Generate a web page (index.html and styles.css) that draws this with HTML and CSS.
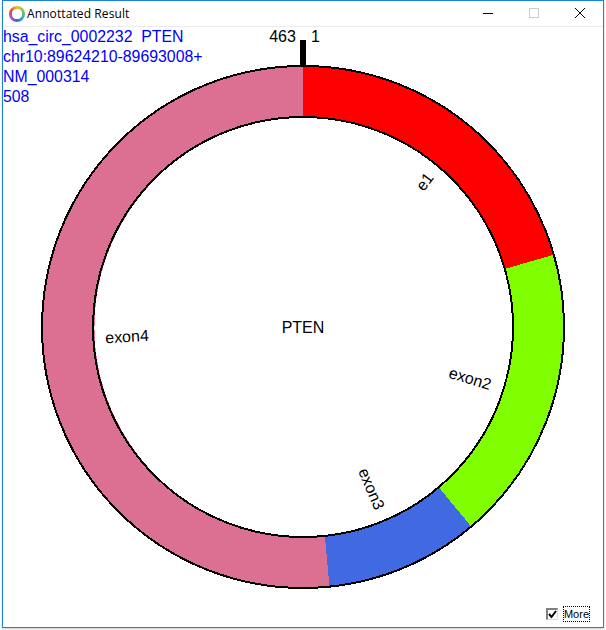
FILE: index.html
```html
<!DOCTYPE html>
<html lang="en">
<head>
    <meta charset="UTF-8">
    <title>Annottated Result</title>
    <link rel="stylesheet" href="styles.css">
</head>
<body>
    <div class="window">
        <div class="titlebar">
            <div class="app-icon"></div>
            <span class="title">Annottated Result</span>
            <div class="controls">
                <svg width="46" height="25" viewBox="0 0 46 25"><path d="M18 12.500h10" class="ctl"/></svg>
                <svg width="46" height="25" viewBox="0 0 46 25"><rect x="18.500" y="7.500" width="9" height="9" class="ctl-off"/></svg>
                <svg width="46" height="25" viewBox="0 0 46 25"><path d="M18 7l10 10M28 7L18 17" class="ctl"/></svg>
            </div>
        </div>
        <div class="canvas">
            <div class="info">
                <div>hsa_circ_0002232&nbsp; PTEN</div>
                <div>chr10:89624210-89693008+</div>
                <div>NM_000314</div>
                <div>508</div>
            </div>

            <!-- viewBox uses window coordinates, centre of the ring is 303,327 -->
            <svg class="plot" width="602" height="601" viewBox="2 27 602 601">
                <path class="seg" fill="#ff0000" d="M303 66A261 261 0 0 1 553.800 254.700L504.800 268.900A210 210 0 0 0 303 117Z"/>
                <path class="seg" fill="#7fff00" d="M553.800 254.700A261 261 0 0 1 470.800 526.100L438.800 487.300A210 210 0 0 0 504.800 268.900Z"/>
                <path class="seg" fill="#4169e1" d="M470.800 526.100A261 261 0 0 1 329.500 586.700L324.900 536A210 210 0 0 0 438.800 487.300Z"/>
                <path class="seg" fill="#db7093" d="M329.500 586.700A261 261 0 1 1 303 66L303 117A210 210 0 1 0 324.900 536Z"/>
                <circle class="ring" cx="303" cy="327" r="261"/>
                <circle class="ring" cx="303" cy="327" r="210"/>
                <rect x="300" y="40" width="6" height="26"/>
                <text class="lbl" x="282.500" y="42" text-anchor="middle">463</text>
                <text class="lbl" x="315.500" y="42" text-anchor="middle">1</text>
                <text class="lbl" x="303" y="333" text-anchor="middle">PTEN</text>
                <text class="lbl" text-anchor="middle" transform="translate(425 182) rotate(-53)" y="5">e1</text>
                <text class="lbl" text-anchor="middle" transform="translate(470 379) rotate(17)" y="5">exon2</text>
                <text class="lbl" text-anchor="middle" transform="translate(371 489) rotate(67)" y="5">exon3</text>
                <text class="lbl" text-anchor="middle" transform="translate(127 337) rotate(-3)" y="5">exon4</text>
            </svg>

            <div class="more">
                <span class="check">
                    <svg width="9" height="9" viewBox="0 0 9 9"><path d="M1 4l2.500 3L8 1" class="tick"/></svg>
                </span>
                <span class="more-label">More</span>
            </div>
        </div>
    </div>
</body>
</html>
```

FILE: styles.css
```css
html, body {
    margin: 0;
    padding: 0;
    background: #fff;
}

body {
    width: 606px;
    height: 630px;
    overflow: hidden;
}

/* window frame */
.window {
    width: 602px;
    height: 628px;
    margin-left: 2px;
    box-sizing: border-box;
    border: 1px solid #1883d7;
    display: flex;
    flex-direction: column;
    background: #fff;
    box-shadow: 0 1px 2px #ccc;
}

.titlebar {
    height: 26px;
    flex: none;
    display: flex;
    align-items: center;
    border-bottom: 1px solid #ececec;
    box-sizing: border-box;
}

.app-icon {
    width: 16px;
    height: 16px;
    margin-left: 6px;
    margin-right: 2px;
    box-sizing: border-box;
    border-radius: 50%;
    background: radial-gradient(circle, #fff 0 4.500px, #eee 5px, transparent 5.500px),
        conic-gradient(#e8c22c, #8bc34a, #3ab0c8, #4169e1, #c04ac0, #e04a4a, #e8c22c);
}

.title {
    font: 12px "Open Sans", sans-serif;
    letter-spacing: 0.1px;
    color: #000;
}

.controls {
    margin-left: auto;
    display: flex;
}

.controls svg {
    display: block;
}

.ctl {
    fill: none;
    stroke: #000;
    stroke-width: 1;
}

.ctl-off {
    fill: none;
    stroke: #ccc;
    stroke-width: 1;
}

/* plot area */
.canvas {
    position: relative;
    flex: 1;
}

.plot {
    position: absolute;
    left: -1px;
    top: 0;
    display: block;
}

.seg {
    stroke: none;
    shape-rendering: crispEdges;
}

.ring {
    fill: none;
    stroke: #000;
    stroke-width: 2;
    shape-rendering: crispEdges;
}

.lbl {
    font: 16px "Liberation Sans", Arial, sans-serif;
    fill: #000;
}

.info {
    position: absolute;
    left: 0;
    top: 0;
    z-index: 1;
    font: 15.850px/20px "Liberation Sans", Arial, sans-serif;
    color: #0000ff;
}

.more {
    position: absolute;
    right: 13px;
    bottom: 5px;
    display: flex;
    align-items: center;
    gap: 5px;
}

.check {
    width: 12px;
    height: 12px;
    box-sizing: border-box;
    border: 2px solid #808080;
    border-right: 1px solid #ddd;
    border-bottom: 1px solid #ddd;
    display: flex;
    align-items: center;
    justify-content: center;
    background: #fff;
}

.tick {
    fill: none;
    stroke: #000;
    stroke-width: 2;
}

.more-label {
    font: 11px "Liberation Sans", Arial, sans-serif;
    border: 1px dotted #000;
    line-height: 14px;
}
```
